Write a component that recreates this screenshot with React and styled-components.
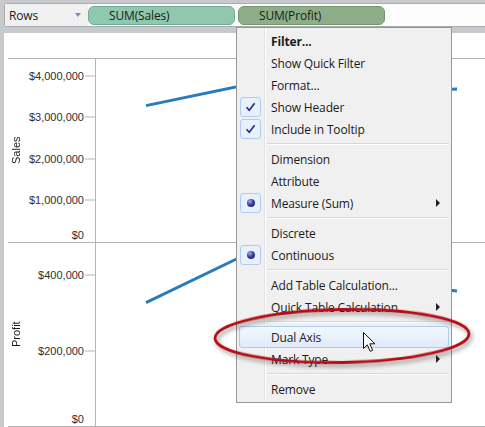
import React from 'react';
import styled, { createGlobalStyle } from 'styled-components';

const UI = `"Segoe UI", "Open Sans", "Noto Sans", sans-serif`;
const ARIAL = `"Liberation Sans", Arial, sans-serif`;

const Global = createGlobalStyle`
  html, body { margin: 0; padding: 0; background: #fff; overflow: hidden; }
  #root { width: 485px; height: 427px; }
`;

const Frame = styled.div`
  position: relative;
  width: 485px;
  height: 427px;
  box-sizing: border-box;
  background: #c8c9cc;
  padding: 3px 0 0 4px;
  display: flex;
  flex-direction: column;
  overflow: hidden;
`;

const Shelf = styled.div`
  height: 24px;
  box-sizing: border-box;
  border: 1px solid #a9abae;
  border-right: none;
  border-radius: 3px 0 0 3px;
  background: #fcfcfc;
  display: flex;
  align-items: center;
  font-family: ${UI};
  font-size: 12px;
  letter-spacing: -0.15px;
  color: #1b1b1b;
`;

const ShelfLabel = styled.div`
  width: 83px;
  height: 100%;
  box-sizing: border-box;
  padding: 0 7px 0 4px;
  background: #f0f0f0;
  display: flex;
  align-items: center;
  justify-content: space-between;
`;

const DropArrow = styled.span`
  width: 0;
  height: 0;
  border-left: 3.5px solid transparent;
  border-right: 3.5px solid transparent;
  border-top: 4px solid #7593b4;
`;

const Pill = styled.div`
  width: 147px;
  height: 19px;
  box-sizing: border-box;
  margin-right: 3px;
  padding-left: 20px;
  border-radius: 6px;
  border: 1px solid ${p => p.$border};
  background: ${p => p.$bg};
  display: flex;
  align-items: center;
`;

const Content = styled.div`
  flex: 1;
  margin-top: 6px;
  background: #fff;
  padding-left: 4px;
  display: flex;
  flex-direction: column;
`;

const HeaderArea = styled.div`
  height: 26px;
  box-sizing: border-box;
  border-bottom: 1px solid #b5b5b5;
`;

const Pane = styled.div`
  height: 184px;
  box-sizing: border-box;
  border-bottom: 1px solid #b5b5b5;
  display: grid;
  grid-template-columns: 88px 1fr;
`;

const AxisCell = styled.div`
  box-sizing: border-box;
  border-right: 1px solid #b5b5b5;
  display: flex;
`;

const AxisTitle = styled.div`
  width: 16px;
  display: flex;
  align-items: center;
  justify-content: center;
  font-family: ${ARIAL};
  font-size: 11px;
  color: #1a1a1a;
  writing-mode: vertical-rl;
  transform: rotate(180deg);
`;

const Ticks = styled.div`
  position: relative;
  flex: 1;
`;

const Tick = styled.div`
  position: absolute;
  right: 0;
  display: flex;
  align-items: center;
  transform: translateY(-50%);
  font-family: ${ARIAL};
  font-size: 11px;
  color: #2e2e2e;
  line-height: 13px;
`;

const TickMark = styled.span`
  width: 10px;
  height: 1px;
  margin-left: 1px;
  background: ${p => (p.$hide ? 'transparent' : '#b5b5b5')};
`;

const Plot = styled.div`
  position: relative;
`;

const PlotSvg = styled.svg`
  position: absolute;
  left: 0;
  top: 0;
  overflow: visible;
`;

const Menu = styled.div`
  position: absolute;
  left: 236px;
  top: 27px;
  width: 216px;
  height: 376px;
  box-sizing: border-box;
  border: 1px solid #979797;
  padding: 2px;
  background:
    linear-gradient(to right, transparent 27px, #e2e3e3 27px, #e2e3e3 28px, #ffffff 28px, #ffffff 29px, transparent 29px),
    #f0f0f0;
  font-family: ${UI};
  font-size: 12px;
  letter-spacing: -0.15px;
  color: #1b1b1b;
`;

const Item = styled.div`
  height: 22px;
  box-sizing: border-box;
  display: flex;
  align-items: center;
  border: 1px solid ${p => (p.$hot ? '#a9cdf3' : 'transparent')};
  border-radius: 3px;
  background: ${p => (p.$hot ? 'linear-gradient(#f3f8fe, #dfeafa)' : 'transparent')};
  font-weight: ${p => (p.$bold ? 700 : 400)};
`;

const IconSlot = styled.div`
  width: 21px;
  height: 20px;
  box-sizing: border-box;
  display: flex;
  align-items: center;
  justify-content: center;
  border: 1px solid ${p => (p.$on ? '#aeccee' : 'transparent')};
  border-radius: 3px;
  background: ${p => (p.$on ? '#e8f0fb' : 'transparent')};
`;

const ItemText = styled.span`
  margin-left: 10px;
  white-space: nowrap;
`;

const SubArrow = styled.span`
  margin-left: auto;
  margin-right: 8px;
  width: 0;
  height: 0;
  border-left: 4px solid #222;
  border-top: 4px solid transparent;
  border-bottom: 4px solid transparent;
`;

const Radio = styled.span`
  width: 8px;
  height: 8px;
  border-radius: 50%;
  background: radial-gradient(circle at 35% 30%, #a7abe6 0%, #3a3f99 45%, #1b1e5e 100%);
`;

const Sep = styled.div`
  height: 8px;
  margin-left: 28px;
  display: flex;
  flex-direction: column;
  justify-content: center;
  &::before {
    content: '';
    border-top: 1px solid #d7d7d7;
    border-bottom: 1px solid #fdfdfd;
  }
`;

const Annotation = styled.svg`
  position: absolute;
  left: 205px;
  top: 298px;
  overflow: visible;
  pointer-events: none;
`;

const Cursor = styled.svg`
  position: absolute;
  left: 363px;
  top: 332px;
  overflow: visible;
`;

const Check = () => (
  <svg width="11" height="10" viewBox="0 0 11 10">
    <path d="M1.5 5.2 L4.3 8.3 L9.6 1.2" fill="none" stroke="#1f2b8a" strokeWidth="1.6" />
  </svg>
);

const panes = [
  {
    title: 'Sales',
    ticks: [
      { label: '$4,000,000', v: 4 },
      { label: '$3,000,000', v: 3 },
      { label: '$2,000,000', v: 2 },
      { label: '$1,000,000', v: 1 },
      { label: '$0', v: 0 },
    ],
    zero: 182.5,
    scale: 41.4,
    points: [[50, 46.6], [154, 25], [258, 34], [361, 30]],
  },
  {
    title: 'Profit',
    ticks: [
      { label: '$400,000', v: 4 },
      { label: '$200,000', v: 2 },
      { label: '$0', v: 0 },
    ],
    zero: 184,
    scale: 38,
    points: [[50, 59.7], [154, 9.5], [258, 37], [361, 48]],
  },
];

const menu = [
  { t: 'Filter...', bold: true },
  { t: 'Show Quick Filter' },
  { t: 'Format...' },
  { t: 'Show Header', icon: 'check' },
  { t: 'Include in Tooltip', icon: 'check' },
  'sep',
  { t: 'Dimension' },
  { t: 'Attribute' },
  { t: 'Measure (Sum)', icon: 'radio', sub: true },
  'sep',
  { t: 'Discrete' },
  { t: 'Continuous', icon: 'radio' },
  'sep',
  { t: 'Add Table Calculation...' },
  { t: 'Quick Table Calculation', sub: true },
  'sep',
  { t: 'Dual Axis', hot: true },
  { t: 'Mark Type', sub: true },
  'sep',
  { t: 'Remove' },
];

export default function App() {
  return (
    <>
      <Global />
      <Frame>
        <Shelf>
          <ShelfLabel>
            <span>Rows</span>
            <DropArrow />
          </ShelfLabel>
          <Pill $bg="#8fc8ae" $border="#6fae93">SUM(Sales)</Pill>
          <Pill $bg="#8dae89" $border="#6f976b">SUM(Profit)</Pill>
        </Shelf>
        <Content>
          <HeaderArea />
          {panes.map(p => (
            <Pane key={p.title}>
              <AxisCell>
                <AxisTitle>{p.title}</AxisTitle>
                <Ticks>
                  {p.ticks.map(t => {
                    const y = p.zero - t.v * p.scale;
                    const labelY = Math.min(y, 176);
                    return (
                      <Tick key={t.label} style={{ top: labelY }}>
                        {t.label}
                        <TickMark $hide={t.v === 0} />
                      </Tick>
                    );
                  })}
                </Ticks>
              </AxisCell>
              <Plot>
                <PlotSvg width="389" height="183">
                  <polyline
                    points={p.points.map(pt => pt.join(',')).join(' ')}
                    fill="none"
                    stroke="#2a7bba"
                    strokeWidth="3"
                  />
                </PlotSvg>
              </Plot>
            </Pane>
          ))}
        </Content>

        <Menu>
          {menu.map((m, i) =>
            m === 'sep' ? (
              <Sep key={i} />
            ) : (
              <Item key={i} $bold={m.bold} $hot={m.hot}>
                <IconSlot $on={!!m.icon}>
                  {m.icon === 'check' && <Check />}
                  {m.icon === 'radio' && <Radio />}
                </IconSlot>
                <ItemText>{m.t}</ItemText>
                {m.sub && <SubArrow />}
              </Item>
            )
          )}
        </Menu>

        <Annotation width="280" height="80" viewBox="0 0 280 80">
          <defs>
            <filter id="sh" x="-10%" y="-30%" width="120%" height="170%">
              <feDropShadow dx="2" dy="3" stdDeviation="2" floodColor="#000" floodOpacity="0.4" />
            </filter>
          </defs>
          <ellipse
            cx="137"
            cy="38"
            rx="127"
            ry="26.5"
            fill="none"
            stroke="#b30f16"
            strokeWidth="2.8"
            transform="rotate(-1 137 38)"
            filter="url(#sh)"
          />
        </Annotation>

        <Cursor width="14" height="21" viewBox="0 0 14 21">
          <path
            d="M0.5 0.5 L0.5 16.5 L4.3 12.8 L7.2 19.3 L9.6 18.3 L6.8 11.8 L12 11.8 Z"
            fill="#fff"
            stroke="#111"
            strokeWidth="1"
            strokeLinejoin="round"
          />
        </Cursor>
      </Frame>
    </>
  );
}
